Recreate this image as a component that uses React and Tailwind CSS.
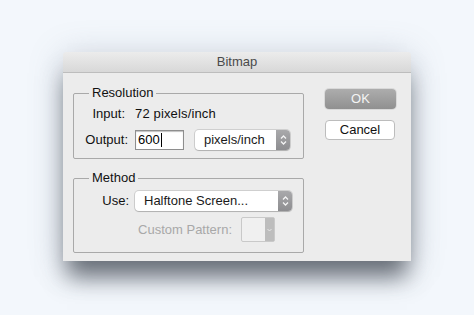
import React from 'react';

function Stepper({ w = 14 }) {
  return (
    <div className="flex h-full items-center justify-center rounded-r-[4px] bg-gradient-to-b from-[#a9a9ab] to-[#8d8d90]" style={{ width: w }}>
      <svg width="7" height="12" viewBox="0 0 7 12" fill="none" stroke="#f4f4f4" strokeWidth="1.3">
        <path d="M1 4.5 L3.5 2 L6 4.5" />
        <path d="M1 7.5 L3.5 10 L6 7.5" />
      </svg>
    </div>
  );
}

function Popup({ label, width }) {
  return (
    <div
      className="flex h-[20px] items-center rounded-[4px] bg-white shadow-[0_0_0_1px_rgba(0,0,0,0.12),0_1px_1px_rgba(0,0,0,0.15)]"
      style={{ width }}
    >
      <span className="flex-1 pl-[9px] text-[13px] leading-[20px] text-[#1a1a1a]">{label}</span>
      <Stepper />
    </div>
  );
}

function GroupBox({ title, height, children }) {
  return (
    <div className="relative w-[231px] rounded-[2px] border border-[#a9a9a9]" style={{ height }}>
      {/* label sits over the top border */}
      <span className="absolute -top-[9px] left-[15px] bg-[#ececec] px-[3px] text-[13px] leading-[16px] text-[#111]">
        {title}
      </span>
      {children}
    </div>
  );
}

export default function App() {
  return (
    <div
      className="h-[315px] w-[474px] overflow-hidden bg-[#f3f7fc] pl-[63px] pt-[52px]"
      style={{ fontFamily: '"Liberation Sans", Arial, sans-serif' }}
    >
      <div className="w-[348px] overflow-hidden rounded-t-[4px] bg-[#ececec] shadow-[0_20px_22px_-4px_rgba(55,62,72,0.7),0_4px_34px_rgba(110,122,140,0.3)]">
        {/* Title bar */}
        <div className="flex h-[21px] items-center justify-center border-b border-[#bdbdbd] bg-gradient-to-b from-[#ececec] to-[#d8d8d8] text-[13px] text-[#4a4a4a]">
          Bitmap
        </div>

        <div className="flex h-[188px] pl-[10px] pt-[20px]">
          {/* Left column: group boxes */}
          <div className="flex flex-col gap-[19px]">
            <GroupBox title="Resolution" height={66}>
              <div className="flex pt-[12px] text-[13px] leading-[16px] text-[#111]">
                <span className="w-[51px] text-right">Input:</span>
                <span className="pl-[10px] tracking-[0.15px]">72 pixels/inch</span>
              </div>
              <div className="mt-[8px] flex items-center text-[13px] text-[#111]">
                <span className="w-[54px] text-right">Output:</span>
                <div className="ml-[7px] flex h-[20px] w-[49px] items-center border border-[#8e8e8e] bg-white pl-[2px] shadow-[inset_0_1px_1px_rgba(0,0,0,0.25)]">
                  <span className="leading-[18px] text-black">600</span>
                  <span className="ml-[1px] h-[14px] w-[1px] bg-black" />
                </div>
                <div className="ml-[11px]">
                  <Popup label="pixels/inch" width={95} />
                </div>
              </div>
            </GroupBox>

            <GroupBox title="Method" height={75}>
              <div className="flex items-center pt-[12px] text-[13px] text-[#111]">
                <span className="w-[55px] text-right">Use:</span>
                <div className="ml-[6px]">
                  <Popup label="Halftone Screen..." width={157} />
                </div>
              </div>
              <div className="mt-[6px] flex items-center text-[13px]">
                <span className="w-[158px] text-right text-[#a8a8a8]">Custom Pattern:</span>
                <div className="ml-[9px] flex h-[25px] w-[34px] rounded-[2px] border border-[#c9c9c9] bg-[#f0f0f0]">
                  <div className="flex-1" />
                  <div className="flex w-[9px] items-center justify-center bg-[#bdbdbd]">
                    <svg width="5" height="4" viewBox="0 0 5 4" fill="none" stroke="#e6e6e6" strokeWidth="1">
                      <path d="M0.5 1 L2.5 3 L4.5 1" />
                    </svg>
                  </div>
                </div>
              </div>
            </GroupBox>
          </div>

          {/* Right column: buttons */}
          <div className="ml-[21px] flex flex-col gap-[11px]">
            <button className="-mt-[4px] h-[20px] w-[71px] rounded-[4px] bg-gradient-to-b from-[#adadad] to-[#909090] text-[13px] leading-[20px] text-[#f4f4f4] shadow-[0_0_0_1px_rgba(0,0,0,0.08)]">
              OK
            </button>
            <button className="h-[20px] w-[70px] rounded-[4px] border border-[#bcbcbc] bg-white text-[13px] leading-[18px] text-[#111]">
              Cancel
            </button>
          </div>
        </div>
      </div>
    </div>
  );
}
